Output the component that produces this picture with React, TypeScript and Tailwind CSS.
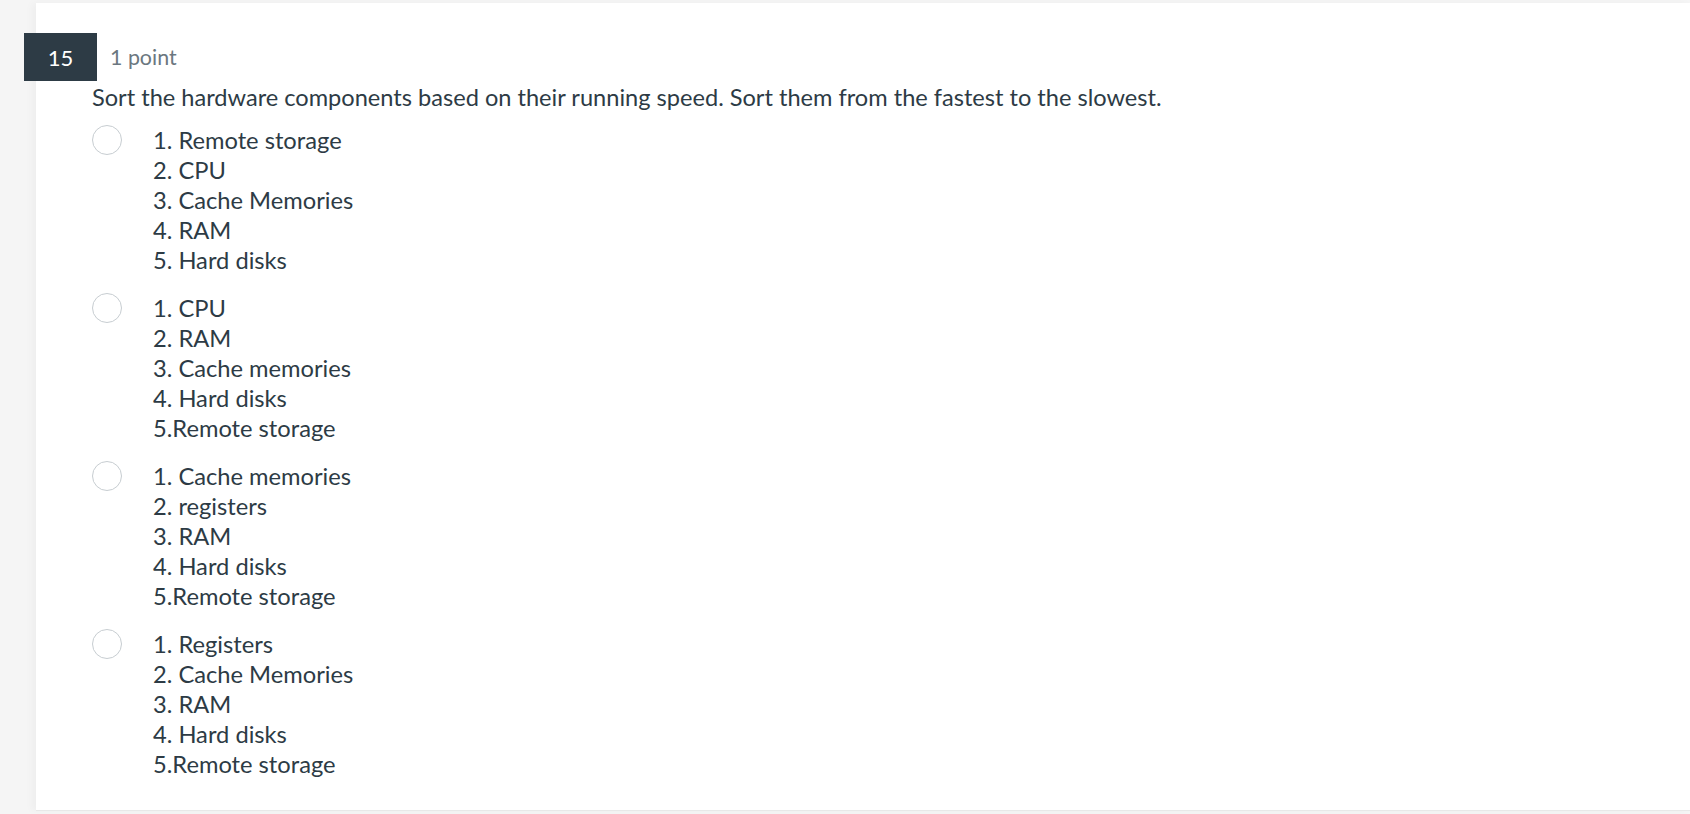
const options: string[][] = [
  ["1. Remote storage", "2. CPU", "3. Cache Memories", "4. RAM", "5. Hard disks"],
  ["1. CPU", "2. RAM", "3. Cache memories", "4. Hard disks", "5.Remote storage"],
  ["1. Cache memories", "2. registers", "3. RAM", "4. Hard disks", "5.Remote storage"],
  ["1. Registers", "2. Cache Memories", "3. RAM", "4. Hard disks", "5.Remote storage"],
];

const App = () => {
  return (
    <div className="h-[814px] overflow-hidden bg-[#f5f5f5] pt-[3px] font-['Lato','Liberation_Sans',sans-serif] text-[#2d3b45]">
      <div className="ml-[36px] h-[808px] border-b border-[#e8e8e8] bg-white shadow-[-4px_0_8px_rgba(0,0,0,0.03)]">
        <div className="flex items-center pt-[30px]">
          <div className="-ml-[12px] flex h-[48px] w-[73px] items-center justify-center bg-[#2d3b45] text-[22px] text-white">
            15
          </div>
          <span className="ml-[13px] text-[21.4px] text-[#6b7780]">1 point</span>
        </div>
        <div className="pl-[56px]">
          <p className="mt-[1px] text-[23.6px] leading-[30px]">
            Sort the hardware components based on their running speed. Sort them from the fastest to the slowest.
          </p>
          <div className="mt-[13px] flex flex-col gap-[18px]">
            {options.map((lines, i) => (
              <label key={i} className="flex items-start">
                <span className="h-[30px] w-[30px] shrink-0 rounded-full border border-[#c7cdd1] bg-white" />
                <span className="ml-[31px] flex flex-col text-[23.7px] leading-[30px]">
                  {lines.map((line) => (
                    <span key={line}>{line}</span>
                  ))}
                </span>
              </label>
            ))}
          </div>
        </div>
      </div>
    </div>
  );
};

export default App;
